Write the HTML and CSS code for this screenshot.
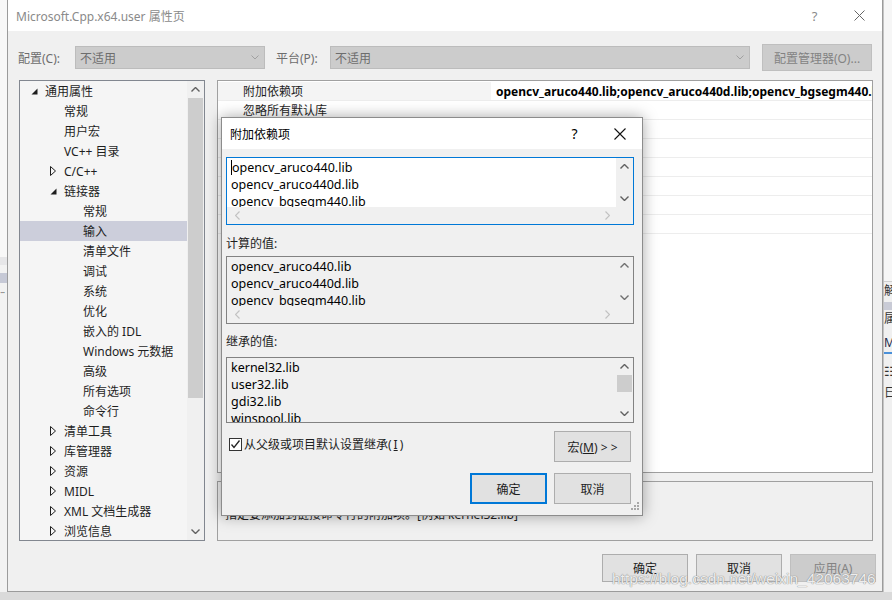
FILE: index.html
```html
<!DOCTYPE html>
<html lang="zh-CN">
<head>
    <meta charset="UTF-8">
    <title>Microsoft.Cpp.x64.user 属性页</title>
    <link rel="stylesheet" href="styles.css">
</head>
<body>

    <div class="desktop">
        <!-- app behind, left edge -->
        <div class="bg-left">
            <div class="bl-top"></div>
            <div class="bl-line"></div>
            <div class="bl-sel"></div>
            <div class="bl-dots">···</div>
            <div class="bl-rest"></div>
        </div>

        <!-- Property pages window -->
        <div class="window">
            <div class="titlebar">
                <span class="title">Microsoft.Cpp.x64.user 属性页</span>
                <span class="tb-btn">?</span>
                <span class="tb-btn">
                    <svg width="11" height="11" viewBox="0 0 11 11"><path d="M0.5 0.5 L10.5 10.5 M10.5 0.5 L0.5 10.5" stroke="#666" stroke-width="1" fill="none"/></svg>
                </span>
            </div>

            <div class="config-row">
                <span class="cfg-label">配置(C):</span>
                <div class="combo combo-config">
                    <span>不适用</span>
                    <svg width="8" height="5" viewBox="0 0 8 5"><polyline points="0.5,0.5 4,4 7.5,0.5" stroke="#a0a0a0" fill="none"/></svg>
                </div>
                <span class="cfg-label cfg-platform">平台(P):</span>
                <div class="combo combo-platform">
                    <span>不适用</span>
                    <svg width="8" height="5" viewBox="0 0 8 5"><polyline points="0.5,0.5 4,4 7.5,0.5" stroke="#a0a0a0" fill="none"/></svg>
                </div>
                <button class="btn btn-off cfg-mgr">配置管理器(O)...</button>
            </div>

            <div class="main">
                <!-- tree -->
                <div class="tree">
                    <ul class="tree-list">
                        <li class="tree-row lv0"><span class="exp"><svg width="7" height="7" viewBox="0 0 7 7"><polygon points="6.5,0.5 6.5,6.5 0.5,6.5" fill="#1e1e1e"/></svg></span>通用属性</li>
                        <li class="tree-row lv2b">常规</li>
                        <li class="tree-row lv2b">用户宏</li>
                        <li class="tree-row lv2b">VC++ 目录</li>
                        <li class="tree-row lv1"><span class="exp"><svg width="6" height="10" viewBox="0 0 6 10"><polygon points="0.5,0.5 5.5,5 0.5,9.5" fill="none" stroke="#1e1e1e"/></svg></span>C/C++</li>
                        <li class="tree-row lv1"><span class="exp"><svg width="7" height="7" viewBox="0 0 7 7"><polygon points="6.5,0.5 6.5,6.5 0.5,6.5" fill="#1e1e1e"/></svg></span>链接器</li>
                        <li class="tree-row lv2">常规</li>
                        <li class="tree-row lv2 selected">输入</li>
                        <li class="tree-row lv2">清单文件</li>
                        <li class="tree-row lv2">调试</li>
                        <li class="tree-row lv2">系统</li>
                        <li class="tree-row lv2">优化</li>
                        <li class="tree-row lv2">嵌入的 IDL</li>
                        <li class="tree-row lv2">Windows 元数据</li>
                        <li class="tree-row lv2">高级</li>
                        <li class="tree-row lv2">所有选项</li>
                        <li class="tree-row lv2">命令行</li>
                        <li class="tree-row lv1"><span class="exp"><svg width="6" height="10" viewBox="0 0 6 10"><polygon points="0.5,0.5 5.5,5 0.5,9.5" fill="none" stroke="#1e1e1e"/></svg></span>清单工具</li>
                        <li class="tree-row lv1"><span class="exp"><svg width="6" height="10" viewBox="0 0 6 10"><polygon points="0.5,0.5 5.5,5 0.5,9.5" fill="none" stroke="#1e1e1e"/></svg></span>库管理器</li>
                        <li class="tree-row lv1"><span class="exp"><svg width="6" height="10" viewBox="0 0 6 10"><polygon points="0.5,0.5 5.5,5 0.5,9.5" fill="none" stroke="#1e1e1e"/></svg></span>资源</li>
                        <li class="tree-row lv1"><span class="exp"><svg width="6" height="10" viewBox="0 0 6 10"><polygon points="0.5,0.5 5.5,5 0.5,9.5" fill="none" stroke="#1e1e1e"/></svg></span>MIDL</li>
                        <li class="tree-row lv1"><span class="exp"><svg width="6" height="10" viewBox="0 0 6 10"><polygon points="0.5,0.5 5.5,5 0.5,9.5" fill="none" stroke="#1e1e1e"/></svg></span>XML 文档生成器</li>
                        <li class="tree-row lv1"><span class="exp"><svg width="6" height="10" viewBox="0 0 6 10"><polygon points="0.5,0.5 5.5,5 0.5,9.5" fill="none" stroke="#1e1e1e"/></svg></span>浏览信息</li>
                    </ul>
                    <div class="vscroll tree-scroll">
                        <div class="arrow"><svg width="9" height="5" viewBox="0 0 9 5"><polyline points="0.5,4.5 4.5,0.5 8.5,4.5" stroke="#606060" fill="none" stroke-width="1.4"/></svg></div>
                        <div class="thumb tree-thumb"></div>
                        <div class="spacer"></div>
                        <div class="arrow"><svg width="9" height="5" viewBox="0 0 9 5"><polyline points="0.5,0.5 4.5,4.5 8.5,0.5" stroke="#606060" fill="none" stroke-width="1.4"/></svg></div>
                    </div>
                </div>

                <!-- property grid -->
                <div class="right-pane">
                    <div class="grid">
                        <div class="prop-row first">
                            <div class="prop-name">附加依赖项</div>
                            <div class="prop-value">opencv_aruco440.lib;opencv_aruco440d.lib;opencv_bgsegm440.lib;opencv_bgsegm440d.lib</div>
                        </div>
                        <div class="prop-row"><div class="prop-name">忽略所有默认库</div><div class="prop-value"></div></div>
                        <div class="prop-row"><div class="prop-name">忽略特定默认库</div><div class="prop-value"></div></div>
                        <div class="prop-row"><div class="prop-name">模块定义文件</div><div class="prop-value"></div></div>
                        <div class="prop-row"><div class="prop-name">将模块添加到程序集</div><div class="prop-value"></div></div>
                        <div class="prop-row"><div class="prop-name">嵌入托管资源文件</div><div class="prop-value"></div></div>
                        <div class="prop-row"><div class="prop-name">强制符号引用</div><div class="prop-value"></div></div>
                        <div class="prop-row"><div class="prop-name">延迟加载的 DLL</div><div class="prop-value"></div></div>
                    </div>
                    <div class="desc">
                        <p class="desc-title">附加依赖项</p>
                        <p>指定要添加到链接命令行的附加项。[例如 kernel32.lib]</p>
                    </div>
                </div>
            </div>

            <div class="footer-buttons">
                <button class="btn">确定</button>
                <button class="btn">取消</button>
                <button class="btn btn-off">应用(A)</button>
            </div>
        </div>

        <!-- app behind, right edge -->
        <div class="bg-right">
            <div class="br-top"></div>
            <div class="br-item">解</div>
            <div class="br-band"></div>
            <div class="br-item">属</div>
            <div class="br-item br-m">M</div>
            <div class="br-item br-icon">☷</div>
            <div class="br-item">日</div>
        </div>
    </div>

    <!-- 附加依赖项 dialog -->
    <div class="dialog">
        <div class="dlg-title">
            <span class="title">附加依赖项</span>
            <span class="tb-btn dlg-help">?</span>
            <span class="tb-btn">
                <svg width="12" height="12" viewBox="0 0 12 12"><path d="M0.5 0.5 L11.5 11.5 M11.5 0.5 L0.5 11.5" stroke="#111" stroke-width="1.1" fill="none"/></svg>
            </span>
        </div>
        <div class="dlg-body">
            <div class="listbox editable">
                <div class="lines"><span class="caret"></span>opencv_aruco440.lib<br>opencv_aruco440d.lib<br>opencv_bgsegm440.lib</div>
                <div class="vscroll">
                    <div class="arrow"><svg width="9" height="5" viewBox="0 0 9 5"><polyline points="0.5,4.5 4.5,0.5 8.5,4.5" stroke="#606060" fill="none" stroke-width="1.4"/></svg></div>
                    <div class="spacer"></div>
                    <div class="arrow"><svg width="9" height="5" viewBox="0 0 9 5"><polyline points="0.5,0.5 4.5,4.5 8.5,0.5" stroke="#606060" fill="none" stroke-width="1.4"/></svg></div>
                </div>
                <div class="hscroll">
                    <div class="arrow"><svg width="5" height="9" viewBox="0 0 5 9"><polyline points="4.5,0.5 0.5,4.5 4.5,8.5" stroke="#c2c2c2" fill="none" stroke-width="1.2"/></svg></div>
                    <div class="arrow"><svg width="5" height="9" viewBox="0 0 5 9"><polyline points="0.5,0.5 4.5,4.5 0.5,8.5" stroke="#c2c2c2" fill="none" stroke-width="1.2"/></svg></div>
                </div>
                <div class="corner"></div>
            </div>

            <p class="dlg-label">计算的值:</p>
            <div class="listbox readonly">
                <div class="lines">opencv_aruco440.lib<br>opencv_aruco440d.lib<br>opencv_bgsegm440.lib</div>
                <div class="vscroll">
                    <div class="arrow"><svg width="9" height="5" viewBox="0 0 9 5"><polyline points="0.5,4.5 4.5,0.5 8.5,4.5" stroke="#707070" fill="none" stroke-width="1.4"/></svg></div>
                    <div class="spacer"></div>
                    <div class="arrow"><svg width="9" height="5" viewBox="0 0 9 5"><polyline points="0.5,0.5 4.5,4.5 8.5,0.5" stroke="#707070" fill="none" stroke-width="1.4"/></svg></div>
                </div>
                <div class="hscroll">
                    <div class="arrow"><svg width="5" height="9" viewBox="0 0 5 9"><polyline points="4.5,0.5 0.5,4.5 4.5,8.5" stroke="#c2c2c2" fill="none" stroke-width="1.2"/></svg></div>
                    <div class="arrow"><svg width="5" height="9" viewBox="0 0 5 9"><polyline points="0.5,0.5 4.5,4.5 0.5,8.5" stroke="#c2c2c2" fill="none" stroke-width="1.2"/></svg></div>
                </div>
                <div class="corner"></div>
            </div>

            <p class="dlg-label inherited">继承的值:</p>
            <div class="listbox readonly no-h">
                <div class="lines">kernel32.lib<br>user32.lib<br>gdi32.lib<br>winspool.lib</div>
                <div class="vscroll">
                    <div class="arrow"><svg width="9" height="5" viewBox="0 0 9 5"><polyline points="0.5,4.5 4.5,0.5 8.5,4.5" stroke="#606060" fill="none" stroke-width="1.4"/></svg></div>
                    <div class="thumb"></div>
                    <div class="spacer"></div>
                    <div class="arrow"><svg width="9" height="5" viewBox="0 0 9 5"><polyline points="0.5,0.5 4.5,4.5 8.5,0.5" stroke="#606060" fill="none" stroke-width="1.4"/></svg></div>
                </div>
            </div>

            <div class="check-row">
                <label class="check">
                    <span class="box"><svg width="11" height="11" viewBox="0 0 11 11"><polyline points="1.5,5.5 4,8.5 9.5,1.5" stroke="#222" stroke-width="1.3" fill="none"/></svg></span>
                    从父级或项目默认设置继承(<u>I</u>)
                </label>
                <button class="btn dlg-btn">宏(<u>M</u>) &gt; &gt;</button>
            </div>

            <div class="dlg-buttons">
                <button class="btn dlg-btn default">确定</button>
                <button class="btn dlg-btn">取消</button>
            </div>
        </div>
        <svg class="grip" width="11" height="11" viewBox="0 0 11 11">
            <g fill="#a8a8a8">
                <rect x="8" y="0" width="2" height="2"/>
                <rect x="5" y="3" width="2" height="2"/><rect x="8" y="3" width="2" height="2"/>
                <rect x="2" y="6" width="2" height="2"/><rect x="5" y="6" width="2" height="2"/><rect x="8" y="6" width="2" height="2"/>
            </g>
        </svg>
    </div>

    <div class="watermark">https://blog.csdn.net/weixin_42063746</div>

</body>
</html>
```

FILE: styles.css
```css
/* Global */
* {
    margin: 0;
    padding: 0;
    box-sizing: border-box;
}

body {
    width: 892px;
    height: 600px;
    overflow: hidden;
    position: relative;
    background-color: #dadada;
    font-family: "Noto Sans", "Noto Sans CJK SC", sans-serif;
    font-size: 12px;
    color: #1e1e1e;
}

.desktop {
    display: flex;
    height: 592px;
}

/* background app edges */
.bg-left {
    width: 7px;
    display: flex;
    flex-direction: column;
    background-color: #f2f2f2;
    overflow: hidden;
}

.bl-top { height: 257px; background-color: #f8f8f8; }
.bl-line { height: 8px; background-color: #e6e6e8; }
.bl-sel { height: 10px; margin-top: 8px; background-color: #c6c9d6; }
.bl-dots { height: 14px; margin-top: 3px; color: #777; font-size: 9px; line-height: 14px; letter-spacing: -1px; }
.bl-rest { flex: 1; }

.bg-right {
    flex: 1;
    display: flex;
    flex-direction: column;
    background-color: #f0f0f0;
    border-left: 1px solid #c4c4c4;
    overflow: hidden;
}

.br-top { height: 282px; background-color: #f6f6f6; border-bottom: 1px solid #d0d0d0; }
.br-item { height: 18px; line-height: 18px; font-size: 12px; color: #333; white-space: nowrap; }
.br-band { height: 8px; margin-top: 2px; background-color: #c9cbd6; }
.br-m { margin-top: 6px; color: #1c2a4a; border-bottom: 2px solid #4a90d9; height: 20px; }
.br-icon { margin-top: 9px; }
.br-item:last-child { margin-top: 3px; }

/* main window */
.window {
    width: 876px;
    background-color: #f0f0f0;
    border: 1px solid #9b9b9b;
    border-top: none;
    display: flex;
    flex-direction: column;
}

.titlebar {
    height: 31px;
    background-color: #fff;
    display: flex;
    align-items: center;
    padding-left: 8px;
    color: #8a8a8a;
}

.titlebar .title {
    flex: 1;
}

.tb-btn {
    width: 45px;
    height: 31px;
    display: flex;
    align-items: center;
    justify-content: center;
    font-size: 13px;
}

/* configuration row */
.config-row {
    margin-top: 13px;
    height: 27px;
    padding-left: 10px;
    display: flex;
    align-items: center;
}

.cfg-label {
    width: 57px;
    color: #6d6d6d;
}

.cfg-platform {
    width: 54px;
    margin-left: 11px;
}

.combo {
    height: 23px;
    background-color: #cccccc;
    border: 1px solid #bcbcbc;
    color: #6d6d6d;
    display: flex;
    align-items: center;
    justify-content: space-between;
    padding: 0 5px 0 4px;
}

.combo-config { width: 190px; }
.combo-platform { width: 420px; }

.btn {
    font-family: inherit;
    font-size: 12px;
    color: #1e1e1e;
    background-color: #e1e1e1;
    border: 1px solid #adadad;
    width: 86px;
    height: 28px;
}

.btn-off {
    background-color: #cccccc;
    border-color: #bfbfbf;
    color: #838383;
}

.cfg-mgr {
    margin-left: 12px;
    width: 110px;
    height: 27px;
}

/* tree + grid */
.main {
    margin-top: 9px;
    height: 461px;
    padding-left: 11px;
    display: flex;
}

.tree {
    width: 186px;
    border: 1px solid #828790;
    background-color: #f5f5f5;
    display: flex;
}

.tree-list {
    flex: 1;
    list-style: none;
}

.tree-row {
    height: 20px;
    display: flex;
    align-items: center;
    white-space: nowrap;
}

.tree-row.lv0 { padding-left: 11px; }
.tree-row.lv1 { padding-left: 30px; }
.tree-row.lv2b { padding-left: 44px; }
.tree-row.lv2 { padding-left: 63px; }

.tree-row.selected {
    background-color: #cccedb;
}

.exp {
    width: 14px;
    display: flex;
    align-items: center;
}

.vscroll {
    width: 17px;
    background-color: #f0f0f0;
    display: flex;
    flex-direction: column;
}

.vscroll .arrow,
.hscroll .arrow {
    width: 17px;
    height: 17px;
    display: flex;
    align-items: center;
    justify-content: center;
}

.spacer {
    flex: 1;
}

.thumb {
    height: 17px;
    margin: 0 1px;
    background-color: #cdcdcd;
}

.tree-thumb {
    height: 300px;
}

.right-pane {
    width: 656px;
    margin-left: 12px;
    display: flex;
    flex-direction: column;
}

.grid {
    height: 393px;
    background-color: #fff;
    border: 1px solid #a0a0a0;
    padding-top: 1px;
    overflow: hidden;
}

.prop-row {
    height: 19px;
    display: flex;
    align-items: center;
    border-bottom: 1px solid #ededed;
}

.prop-name {
    width: 273px;
    height: 100%;
    display: flex;
    align-items: center;
    padding-left: 25px;
}

.prop-row.first .prop-name {
    background-color: #f4f4f4;
}

.prop-value {
    flex: 1;
    padding-left: 5px;
    font-weight: bold;
    white-space: nowrap;
    overflow: hidden;
    color: #000;
}

.desc {
    margin-top: 8px;
    height: 60px;
    border: 1px solid #a0a0a0;
    background-color: #f0f0f0;
    padding: 4px 7px;
    line-height: 19px;
}

.desc-title {
    font-weight: bold;
}

.footer-buttons {
    margin-top: 13px;
    display: flex;
    justify-content: flex-end;
    gap: 8px;
    padding-right: 6px;
}

/* dialog */
.dialog {
    position: absolute;
    left: 221px;
    top: 117px;
    width: 422px;
    height: 399px;
    background-color: #f0f0f0;
    border: 1px solid #8c8c8c;
    box-shadow: 0 0 14px rgba(0, 0, 0, 0.35);
}

.dlg-title {
    height: 31px;
    background-color: #fff;
    display: flex;
    align-items: center;
    padding-left: 8px;
    color: #000;
}

.dlg-title .title {
    flex: 1;
}

.dlg-help {
    font-size: 14px;
}

.dlg-body {
    padding: 0 8px 0 4px;
}

.listbox {
    margin-top: 8px;
    height: 68px;
    border: 1px solid #828282;
    display: grid;
    grid-template-columns: 1fr 17px;
    grid-template-rows: 1fr 17px;
    overflow: hidden;
}

.listbox.editable {
    border-color: #0078d7;
    background-color: #fff;
}

.listbox.readonly {
    background-color: #f0f0f0;
    margin-top: 0;
}

.listbox.no-h {
    height: 66px;
    grid-template-rows: 1fr;
}

.lines {
    padding: 1px 4px;
    line-height: 17px;
    white-space: nowrap;
    overflow: hidden;
    font-size: 12.5px;
    color: #000;
}

.caret {
    display: inline-block;
    width: 1px;
    height: 15px;
    background-color: #000;
    vertical-align: -3px;
}

.hscroll {
    background-color: #f0f0f0;
    display: flex;
    justify-content: space-between;
    padding-left: 2px;
}

.corner {
    background-color: #f0f0f0;
}

.dlg-label {
    margin-top: 10px;
    height: 18px;
    line-height: 18px;
    margin-bottom: 3px;
}

.dlg-label.inherited {
    margin-top: 9px;
    margin-bottom: 6px;
}

.check-row {
    margin-top: 8px;
    height: 31px;
    padding-right: 3px;
    display: flex;
    justify-content: space-between;
    align-items: flex-start;
}

.check {
    margin: 4px 0 0 3px;
    display: flex;
    align-items: center;
    gap: 2px;
}

.check .box {
    width: 13px;
    height: 13px;
    border: 1px solid #333;
    background-color: #fff;
    display: flex;
    align-items: center;
    justify-content: center;
}

.dlg-btn {
    width: 77px;
    height: 31px;
}

.dlg-btn.default {
    border: 2px solid #0078d7;
}

.dlg-buttons {
    margin-top: 11px;
    padding-right: 3px;
    display: flex;
    justify-content: flex-end;
    gap: 7px;
}

.grip {
    position: absolute;
    right: 2px;
    bottom: 2px;
}

.watermark {
    position: absolute;
    left: 612px;
    top: 570px;
    font-family: "Liberation Sans", Arial, sans-serif;
    font-size: 15.5px;
    color: rgba(255, 255, 255, 0.85);
    text-shadow: 0 0 1px #8a8a8a, 0 0 1px #8a8a8a;
    white-space: nowrap;
}
```
